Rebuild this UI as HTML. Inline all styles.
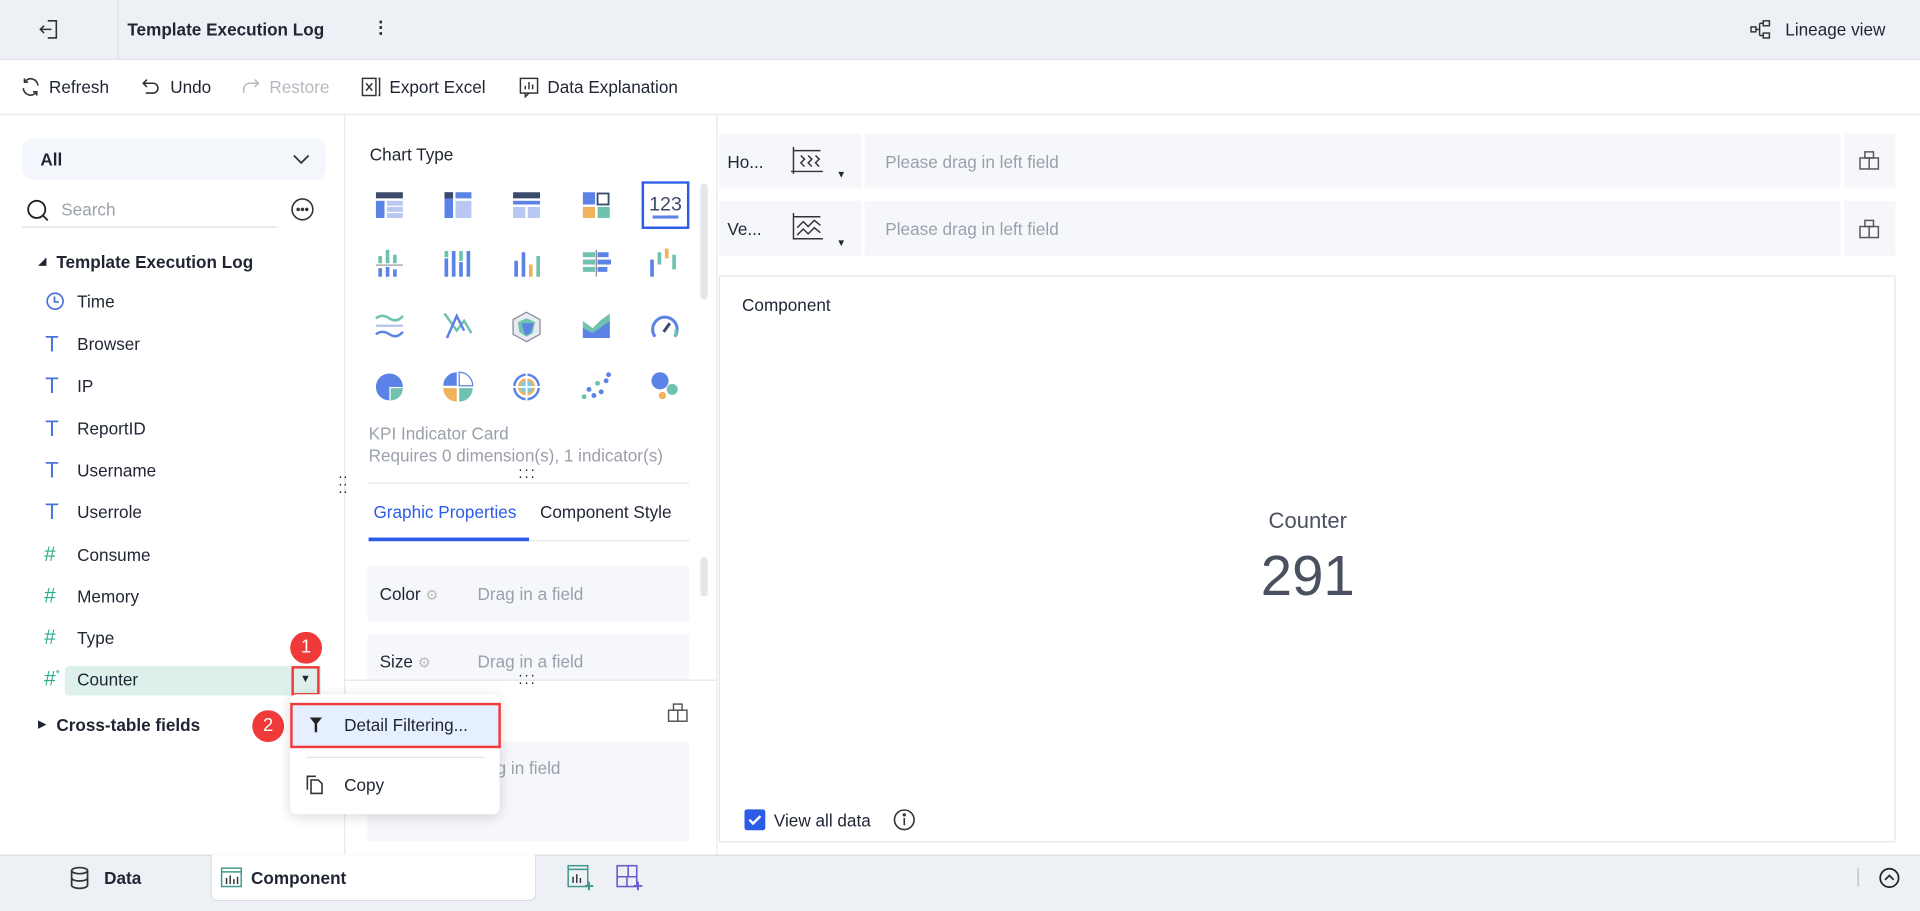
<!DOCTYPE html>
<html><head><meta charset="utf-8">
<style>
*{box-sizing:border-box;margin:0;padding:0}
html,body{width:1920px;height:911px;overflow:hidden;background:#fff}
#w{position:absolute;left:0;top:0;width:1568px;height:744px;transform:scale(1.22449);transform-origin:0 0;font-family:"Liberation Sans",sans-serif;color:#1f2533;font-size:14px}
.a{position:absolute}
.t{position:absolute;white-space:nowrap}
.ic{position:absolute}
.gray{color:#9aa0ab}
.fld{position:absolute;left:63px;font-size:14px;color:#1f2533}
.box{position:absolute;background:#f5f7fb}
</style></head><body><div id="w">
<div class="a" style="left:0;top:0;width:1568px;height:49px;background:#edf0f5;border-bottom:1px solid #e0e4ea"></div>
<div class="a" style="left:96px;top:0;width:1px;height:49px;background:#e0e4ea"></div>
<svg class="ic" style="left:31px;top:15px" width="18" height="18" viewBox="0 0 18 18" fill="none" stroke="#333" stroke-width="1.3"><path d="M8 2h7v14H8"/><path d="M11 9H2M5 6L2 9l3 3"/></svg>
<div class="t" style="left:104px;top:16px;font-weight:bold;font-size:14px">Template Execution Log</div>
<div class="t" style="left:304px;top:14px;font-weight:bold">⋮</div>
<svg class="ic" style="left:1429px;top:16px" width="18" height="16" viewBox="0 0 18 16" fill="none" stroke="#333" stroke-width="1.2"><rect x="1" y="6" width="4" height="4"/><rect x="11" y="1" width="5" height="4"/><rect x="11" y="11" width="5" height="4"/><path d="M5 8h3M8 3v10M8 3h3M8 13h3"/></svg>
<div class="t" style="left:1458px;top:16px">Lineage view</div>
<div class="a" style="left:0;top:93px;width:1568px;height:1px;background:#e6e8ec"></div>
<svg class="ic" style="left:16px;top:62px" width="18" height="18" viewBox="0 0 18 18" fill="none" stroke="#333" stroke-width="1.3"><path d="M15 8A6 6 0 0 0 4 5M3 10a6 6 0 0 0 11 3"/><path d="M4 2v3h3M14 16v-3h-3"/></svg>
<div class="t" style="left:40px;top:63px">Refresh</div>
<svg class="ic" style="left:114px;top:62px" width="18" height="18" viewBox="0 0 18 18" fill="none" stroke="#333" stroke-width="1.3"><path d="M3 6h8a4 4 0 0 1 0 8H5M6 3L3 6l3 3"/></svg>
<div class="t" style="left:139px;top:63px">Undo</div>
<svg class="ic" style="left:196px;top:62px" width="18" height="18" viewBox="0 0 18 18" fill="none" stroke="#bbb" stroke-width="1.3"><path d="M15 6H8a5 5 0 0 0-5 5v3M12 3l3 3-3 3"/></svg>
<div class="t" style="left:220px;top:63px;color:#b5b9c0">Restore</div>
<svg class="ic" style="left:294px;top:62px" width="18" height="18" viewBox="0 0 18 18" fill="none" stroke="#333" stroke-width="1.2"><rect x="2" y="2" width="11" height="14"/><path d="M15 2h1v14h-1M5 6l5 6M10 6l-5 6"/></svg>
<div class="t" style="left:318px;top:63px">Export Excel</div>
<svg class="ic" style="left:423px;top:62px" width="18" height="18" viewBox="0 0 18 18" fill="none" stroke="#333" stroke-width="1.2"><rect x="2" y="2" width="14" height="12"/><path d="M6 14l0 3 3-3M6 11V8M9 11V5M12 11V7"/></svg>
<div class="t" style="left:447px;top:63px">Data Explanation</div>
<div class="a" style="left:281px;top:94px;width:1px;height:604px;background:#e6e8ec"></div>
<div class="a" style="left:18px;top:113px;width:248px;height:34px;background:#f3f6fb;border-radius:9px"></div>
<div class="t" style="left:33px;top:122px;font-weight:bold">All</div>
<svg class="ic" style="left:238px;top:124px" width="16" height="12" viewBox="0 0 16 12" fill="none" stroke="#333" stroke-width="1.5"><path d="M2 3l6 6 6-6"/></svg>
<svg class="ic" style="left:21px;top:162px" width="20" height="20" viewBox="0 0 20 20" fill="none" stroke="#222" stroke-width="1.5"><circle cx="9" cy="9" r="7"/><path d="M14 14l4 4"/></svg>
<div class="t gray" style="left:50px;top:163px">Search</div>
<div class="a" style="left:18px;top:185px;width:208px;height:1px;background:#dde1e7"></div>
<svg class="ic" style="left:237px;top:161px" width="20" height="20" viewBox="0 0 20 20" fill="none" stroke="#333" stroke-width="1.3"><circle cx="10" cy="10" r="8.5"/><circle cx="6.5" cy="10" r=".8" fill="#333"/><circle cx="10" cy="10" r=".8" fill="#333"/><circle cx="13.5" cy="10" r=".8" fill="#333"/></svg>
<div class="t" style="left:31px;top:208px;font-size:9px">◢</div>
<div class="t" style="left:46px;top:206px;font-weight:bold">Template Execution Log</div>
<svg class="ic" style="left:37px;top:238px" width="16" height="16" viewBox="0 0 16 16" fill="none" stroke="#4a76d9" stroke-width="1.4"><circle cx="8" cy="8" r="6.5"/><path d="M7.5 4v4.5H11"/></svg>
<div class="fld" style="top:238px">Time</div>
<div class="t" style="left:37px;top:271px;font-size:18px;color:#4a76d9">T</div><div class="fld" style="top:273px">Browser</div>
<div class="t" style="left:37px;top:305px;font-size:18px;color:#4a76d9">T</div><div class="fld" style="top:307px">IP</div>
<div class="t" style="left:37px;top:340px;font-size:18px;color:#4a76d9">T</div><div class="fld" style="top:342px">ReportID</div>
<div class="t" style="left:37px;top:374px;font-size:18px;color:#4a76d9">T</div><div class="fld" style="top:376px">Username</div>
<div class="t" style="left:37px;top:408px;font-size:18px;color:#4a76d9">T</div><div class="fld" style="top:410px">Userrole</div>
<div class="t" style="left:36px;top:443px;font-size:17px;color:#2fae8f">#</div><div class="fld" style="top:445px">Consume</div>
<div class="t" style="left:36px;top:477px;font-size:17px;color:#2fae8f">#</div><div class="fld" style="top:479px">Memory</div>
<div class="t" style="left:36px;top:511px;font-size:17px;color:#2fae8f">#</div><div class="fld" style="top:513px">Type</div>
<div class="a" style="left:53px;top:544px;width:209px;height:24px;background:#ddf0ec;border-radius:3px 0 0 3px"></div>
<div class="t" style="left:36px;top:545px;font-size:17px;color:#2fae8f">#<span style="font-size:9px;vertical-align:top">*</span></div>
<div class="fld" style="top:547px">Counter</div>
<div class="a" style="left:238px;top:544px;width:23px;height:24px;border:2px solid #f03a3a"></div>
<div class="t" style="left:245px;top:549px;font-size:9px">▼</div>
<div class="a" style="left:237px;top:516px;width:26px;height:26px;border-radius:50%;background:#f03a3a;color:#fff;text-align:center;line-height:26px;font-size:15px">1</div>
<div class="a" style="left:206px;top:580px;width:26px;height:26px;border-radius:50%;background:#f03a3a;color:#fff;text-align:center;line-height:26px;font-size:15px">2</div>
<div class="t" style="left:31px;top:586px;font-size:9px">▶</div>
<div class="t" style="left:46px;top:584px;font-weight:bold">Cross-table fields</div>
<div class="a" style="left:585px;top:94px;width:1px;height:604px;background:#e6e8ec"></div>
<div class="t" style="left:302px;top:118px">Chart Type</div>
<svg class="ic" style="left:300px;top:148px" width="270" height="190" viewBox="300 148 270 190">
<rect x="307" y="157" width="22" height="5" fill="#3c4a6b"/><rect x="307" y="164" width="7" height="14" fill="#5b82e5"/><rect x="316" y="164" width="13" height="4" fill="#b9c8f2"/><rect x="316" y="169" width="13" height="4" fill="#b9c8f2"/><rect x="316" y="174" width="13" height="4" fill="#b9c8f2"/>
<rect x="363" y="157" width="7" height="21" fill="#5b82e5"/><rect x="363" y="157" width="7" height="5" fill="#3c4a6b"/><rect x="372" y="157" width="13" height="5" fill="#5b82e5"/><rect x="372" y="164" width="13" height="14" fill="#b9c8f2"/>
<rect x="419" y="157" width="22" height="5" fill="#3c4a6b"/><rect x="419" y="164" width="22" height="3" fill="#5b82e5"/><rect x="419" y="169" width="10" height="9" fill="#b9c8f2"/><rect x="431" y="169" width="10" height="9" fill="#b9c8f2"/>
<rect x="476" y="157" width="10" height="10" fill="#5b82e5"/><rect x="488" y="158" width="9" height="9" fill="none" stroke="#3c4a6b" stroke-width="1.5"/><rect x="476" y="169" width="10" height="9" fill="#f0b25a"/><rect x="488" y="169" width="10" height="9" fill="#6fc1b0"/>
<rect x="525" y="149" width="37" height="37" fill="#fff" stroke="#2b5ce6" stroke-width="2"/><text x="543.5" y="172" font-size="16" text-anchor="middle" fill="#3c4a6b" font-family="Liberation Sans">123</text><rect x="533" y="176" width="21" height="2.5" fill="#5b82e5"/>
<g fill="#5b82e5"><rect x="309" y="209" width="3" height="6" fill="#6fc1b0"/><rect x="315" y="204" width="3" height="11" fill="#6fc1b0"/><rect x="321" y="208" width="3" height="7" fill="#6fc1b0"/><rect x="307" y="216" width="22" height="1" fill="#999"/><rect x="309" y="219" width="3" height="7"/><rect x="315" y="218" width="3" height="8"/><rect x="321" y="220" width="3" height="6"/></g>
<g fill="#5b82e5"><rect x="363" y="205" width="3" height="5" fill="#6fc1b0"/><rect x="363" y="211" width="3" height="15"/><rect x="369" y="205" width="3" height="21"/><rect x="375" y="205" width="3" height="8" fill="#6fc1b0"/><rect x="375" y="214" width="3" height="12"/><rect x="381" y="205" width="3" height="21"/></g>
<g><rect x="420" y="213" width="3" height="13" fill="#5b82e5"/><rect x="426" y="206" width="3" height="20" fill="#5b82e5"/><rect x="432" y="216" width="3" height="10" fill="#f0b25a"/><rect x="438" y="209" width="3" height="17" fill="#6fc1b0"/></g>
<g><rect x="476" y="206" width="10" height="4" fill="#6fc1b0"/><rect x="488" y="206" width="9" height="4" fill="#5b82e5"/><rect x="476" y="212" width="10" height="4" fill="#6fc1b0"/><rect x="488" y="212" width="11" height="4" fill="#5b82e5"/><rect x="476" y="218" width="10" height="4" fill="#6fc1b0"/><rect x="488" y="218" width="8" height="4" fill="#5b82e5"/><rect x="486.5" y="204" width="1" height="22" fill="#888"/></g>
<g><rect x="531" y="212" width="3" height="14" fill="#5b82e5"/><rect x="537" y="206" width="3" height="10" fill="#6fc1b0"/><rect x="543" y="203" width="3" height="8" fill="#f0b25a"/><rect x="549" y="208" width="3" height="12" fill="#6fc1b0"/></g>
<g fill="none" stroke-width="2"><path d="M307 260q5-4 11 0t11-2" stroke="#6fc1b0"/><path d="M307 266h22" stroke="#b9c8f2"/><path d="M307 273q5-4 11 0t11-2" stroke="#5b82e5"/></g>
<g fill="none" stroke-width="2"><path d="M363 256l10 14 6-8 6 10" stroke="#6fc1b0"/><path d="M365 276l8-18 6 12" stroke="#5b82e5"/></g>
<path d="M430 255l11 6v12l-11 6-11-6v-12z" fill="#e8ecf2" stroke="#889" stroke-width="1"/><path d="M430 260l7 3-2 9-5 3-6-4-1-8z" fill="#6fc1b0"/><path d="M426 264l10 0-3 8-4 2z" fill="#5b82e5"/>
<path d="M476 276v-14l8 6 6-6 8-6v20z" fill="#6fc1b0"/><path d="M476 276v-8l8 4 6-4 8-6v14z" fill="#5b82e5"/>
<path d="M535 275a10 10 0 1 1 16 0" fill="none" stroke="#5b82e5" stroke-width="2.5"/><path d="M552 269a10 10 0 0 1-1 6" stroke="#6fc1b0" stroke-width="2.5" fill="none"/><path d="M542 271l5-7" stroke="#3c4a6b" stroke-width="2.5"/>
<circle cx="318" cy="316" r="11" fill="#5b82e5"/><path d="M318 316h11a11 11 0 0 1-11 11z" fill="#fff"/><path d="M319 317h10a10 10 0 0 1-10 10z" fill="#6fc1b0"/>
<path d="M373 315v-11a11 11 0 0 0-11 11z" fill="#5b82e5"/><path d="M375 315v-11a11 11 0 0 1 11 11z" fill="#fff" stroke="#5b82e5" stroke-width="1"/><path d="M373 317h-11a11 11 0 0 0 11 11z" fill="#f0b25a"/><path d="M375 317h11a11 11 0 0 1-11 11z" fill="#6fc1b0"/>
<circle cx="430" cy="316" r="10" fill="none" stroke="#5b82e5" stroke-width="2"/><circle cx="430" cy="316" r="6" fill="#7bc9e8" stroke="#f0b25a" stroke-width="2"/><path d="M430 305v22M419 316h22" stroke="#fff" stroke-width="1.5"/>
<g fill="#5b82e5"><circle cx="477" cy="324" r="2" fill="#6fc1b0"/><circle cx="481" cy="318" r="2"/><circle cx="485" cy="323" r="2"/><circle cx="488" cy="313" r="2" fill="#6fc1b0"/><circle cx="491" cy="320" r="2"/><circle cx="495" cy="311" r="2"/><circle cx="497" cy="306" r="2"/></g>
<circle cx="539" cy="311" r="7" fill="#5b82e5"/><circle cx="549" cy="318" r="4.5" fill="#6fc1b0"/><circle cx="541" cy="323" r="3" fill="#f0b25a"/>
</svg>
<div class="a" style="left:572px;top:150px;width:6px;height:95px;background:#e3e6eb;border-radius:3px"></div>
<div class="t gray" style="left:301px;top:346px">KPI Indicator Card</div>
<div class="t gray" style="left:301px;top:364px">Requires 0 dimension(s), 1 indicator(s)</div>
<div class="t" style="left:423px;top:380px;font-size:12px;letter-spacing:1px;line-height:6px">···<br>···</div>
<div class="t" style="left:276px;top:386px;font-size:12px;line-height:6px">··<br>··<br>··</div>
<div class="a" style="left:301px;top:394px;width:262px;height:1px;background:#e3e6eb"></div>
<div class="t" style="left:305px;top:410px;color:#2b5ce6">Graphic Properties</div>
<div class="t" style="left:441px;top:410px">Component Style</div>
<div class="a" style="left:301px;top:441px;width:262px;height:1px;background:#e3e6eb"></div>
<div class="a" style="left:301px;top:439px;width:131px;height:3px;background:#2b5ce6"></div>
<div class="box" style="left:300px;top:462px;width:263px;height:45px"></div>
<div class="t" style="left:310px;top:477px">Color <span style="color:#bbb;font-size:12px">⚙</span></div>
<div class="t gray" style="left:390px;top:477px">Drag in a field</div>
<div class="box" style="left:300px;top:518px;width:263px;height:37px"></div>
<div class="t" style="left:310px;top:532px">Size <span style="color:#bbb;font-size:12px">⚙</span></div>
<div class="t gray" style="left:390px;top:532px">Drag in a field</div>
<div class="a" style="left:572px;top:455px;width:6px;height:32px;background:#e3e6eb;border-radius:3px"></div>
<div class="a" style="left:282px;top:555px;width:303px;height:1px;background:#e3e6eb"></div>
<div class="t" style="left:423px;top:548px;font-size:12px;letter-spacing:1px;line-height:6px">···<br>···</div>
<svg class="ic" style="left:545px;top:573px" width="17" height="17" viewBox="0 0 17 17" fill="none" stroke="#555" stroke-width="1.2"><rect x="1" y="7" width="15" height="9"/><rect x="5" y="2" width="7" height="5"/><path d="M8.5 7v9"/></svg>
<div class="box" style="left:300px;top:606px;width:263px;height:81px"></div>
<div class="t gray" style="left:383px;top:619px">Drag in field</div>
<div class="a" style="left:237px;top:567px;width:171px;height:98px;background:#fff;border-radius:5px;box-shadow:0 2px 10px rgba(0,0,0,.15)"></div>
<div class="a" style="left:237px;top:574px;width:172px;height:37px;background:#e6efff;border:2px solid #f03a3a"></div>
<svg class="ic" style="left:252px;top:585px" width="12" height="14" viewBox="0 0 12 14"><path d="M1 1h10L7 6v7H5V6z" fill="#222"/></svg>
<div class="t" style="left:281px;top:584px">Detail Filtering...</div>
<div class="a" style="left:250px;top:618px;width:146px;height:1px;background:#e3e6eb"></div>
<svg class="ic" style="left:248px;top:632px" width="18" height="18" viewBox="0 0 18 18" fill="none" stroke="#333" stroke-width="1.3"><path d="M3 13V2h7"/><path d="M6 5h6l3 3v8H6z"/></svg>
<div class="t" style="left:281px;top:633px">Copy</div>
<div class="box" style="left:587px;top:109px;width:117px;height:45px"></div>
<div class="box" style="left:706px;top:109px;width:797px;height:45px"></div>
<div class="box" style="left:1506px;top:109px;width:42px;height:45px"></div>
<div class="t" style="left:594px;top:124px">Ho...</div>
<svg class="ic" style="left:646px;top:119px" width="28" height="24" viewBox="0 0 28 24" fill="none" stroke="#333" stroke-width="1.2"><path d="M2 1v22M0 21h26M2 4h22"/><path d="M8 8l3 3-3 3 3 3M14 8l3 3-3 3 3 3M20 8l3 3-3 3 3 3"/></svg>
<div class="t" style="left:683px;top:138px;font-size:8px">▼</div>
<div class="t gray" style="left:723px;top:124px">Please drag in left field</div>
<svg class="ic" style="left:1518px;top:122px" width="17" height="17" viewBox="0 0 17 17" fill="none" stroke="#555" stroke-width="1.2"><rect x="1" y="7" width="15" height="9"/><rect x="5" y="2" width="7" height="5"/><path d="M8.5 7v9"/></svg>
<div class="box" style="left:587px;top:164px;width:117px;height:45px"></div>
<div class="box" style="left:706px;top:164px;width:797px;height:45px"></div>
<div class="box" style="left:1506px;top:164px;width:42px;height:45px"></div>
<div class="t" style="left:594px;top:179px">Ve...</div>
<svg class="ic" style="left:646px;top:173px" width="28" height="24" viewBox="0 0 28 24" fill="none" stroke="#333" stroke-width="1.2"><path d="M2 1v21h24M2 4h22"/><path d="M5 13l5-5 4 4 5-5 5 4M5 19l5-5 4 4 5-5 5 4"/></svg>
<div class="t" style="left:683px;top:194px;font-size:8px">▼</div>
<div class="t gray" style="left:723px;top:179px">Please drag in left field</div>
<svg class="ic" style="left:1518px;top:178px" width="17" height="17" viewBox="0 0 17 17" fill="none" stroke="#555" stroke-width="1.2"><rect x="1" y="7" width="15" height="9"/><rect x="5" y="2" width="7" height="5"/><path d="M8.5 7v9"/></svg>
<div class="a" style="left:587px;top:225px;width:961px;height:463px;border:1px solid #e3e6eb"></div>
<div class="t" style="left:606px;top:241px">Component</div>
<div class="t" style="left:1068px;top:415px;transform:translateX(-50%);font-size:18px;color:#4a5060">Counter</div>
<div class="t" style="left:1068px;top:443px;transform:translateX(-50%);font-size:46px;color:#4a5060">291</div>
<div class="a" style="left:608px;top:661px;width:17px;height:17px;background:#2b5ce6;border-radius:2px"></div>
<svg class="ic" style="left:608px;top:661px" width="17" height="17" viewBox="0 0 17 17"><path d="M4 8.5l3 3 6-6" fill="none" stroke="#fff" stroke-width="2"/></svg>
<div class="t" style="left:632px;top:662px">View all data</div>
<svg class="ic" style="left:729px;top:660px" width="19" height="19" viewBox="0 0 19 19" fill="none" stroke="#333" stroke-width="1.3"><circle cx="9.5" cy="9.5" r="8"/><path d="M9.5 8v6"/><circle cx="9.5" cy="5.5" r=".7" fill="#333"/></svg>
<div class="a" style="left:0;top:698px;width:1568px;height:46px;background:#edf0f5;border-top:1px solid #d9dde3"></div>
<svg class="ic" style="left:56px;top:707px" width="18" height="20" viewBox="0 0 18 20" fill="none" stroke="#333" stroke-width="1.4"><ellipse cx="9" cy="4" rx="6.5" ry="2.5"/><path d="M2.5 4v12c0 1.4 3 2.5 6.5 2.5s6.5-1.1 6.5-2.5V4M2.5 10c0 1.4 3 2.5 6.5 2.5s6.5-1.1 6.5-2.5"/></svg>
<div class="t" style="left:85px;top:709px;font-weight:bold">Data</div>
<div class="a" style="left:172px;top:698px;width:266px;height:38px;background:#fff;border:1px solid #d9dde3;border-top:none;border-radius:0 0 6px 6px"></div>
<svg class="ic" style="left:180px;top:708px" width="18" height="17" viewBox="0 0 18 17" fill="none" stroke="#3d9a86" stroke-width="1.2"><rect x="1" y="1" width="16" height="15"/><path d="M1 4h16"/><path d="M5 14V9M8 14V7M11 14V10M14 14V8" stroke="#333"/></svg>
<div class="t" style="left:205px;top:709px;font-weight:bold">Component</div>
<svg class="ic" style="left:463px;top:706px" width="22" height="22" viewBox="0 0 22 22" fill="none" stroke="#3d9a86" stroke-width="1.2"><rect x="1" y="1" width="16" height="17"/><path d="M1 4h16"/><path d="M5 15V10M8 15V8M11 15V11" stroke="#333"/><path d="M18 14v7M14.5 17.5h7" stroke="#3d9a86" stroke-width="1.6"/></svg>
<svg class="ic" style="left:503px;top:706px" width="22" height="22" viewBox="0 0 22 22" fill="none" stroke="#6a5acd" stroke-width="1.3"><rect x="1" y="1" width="16" height="17"/><path d="M1 10h16M9 10v8M10 1v9"/><path d="M18 14v7M14.5 17.5h7" stroke-width="1.6"/></svg>
<div class="a" style="left:1517px;top:709px;width:1px;height:15px;background:#bbb"></div>
<svg class="ic" style="left:1534px;top:708px" width="18" height="18" viewBox="0 0 18 18" fill="none" stroke="#222" stroke-width="1.4"><circle cx="9" cy="9" r="7.5"/><path d="M5.5 10.5L9 7l3.5 3.5"/></svg>
</div></body></html>
